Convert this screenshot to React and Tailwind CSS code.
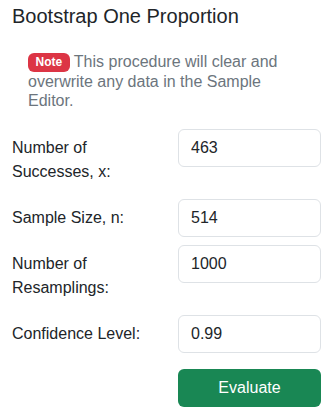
const fields = [
  { label: ['Number of', 'Successes, x:'], value: '463' },
  { label: ['Sample Size, n:'], value: '514' },
  { label: ['Number of', 'Resamplings:'], value: '1000' },
  { label: ['Confidence Level:'], value: '0.99' },
];

const App = () => {
  return (
    <div className="w-[332px] h-[419px] bg-white font-['Liberation_Sans',Arial,sans-serif] text-[#212529] pl-3 pr-[11px]">
      {/* title */}
      <h2 className="pt-1 text-[20px] leading-[24px]">Bootstrap One Proportion</h2>

      {/* note */}
      <p className="mt-6 pl-4 pr-4 text-base leading-[19.2px] text-[#6c757d]">
        <span className="inline-block bg-[#dc3545] text-white text-[12px] font-bold leading-none px-[7.5px] pt-[3.5px] pb-[3.5px] rounded-[6px] align-[1px]">
          Note
        </span>{' '}
        <span>This procedure will clear and</span>{' '}
        <span>overwrite any data in the Sample Editor.</span>
      </p>

      {/* form */}
      <div className="mt-[19px] flex flex-col gap-2">
        {fields.map((f, i) => (
          <div key={i} className="grid grid-cols-[166px_1fr] items-start">
            <label className="pt-[7px] pb-[7px] text-base leading-6">
              {f.label.map((l, j) => (
                <div key={j}>{l}</div>
              ))}
            </label>
            <input
              type="text"
              defaultValue={f.value}
              className="w-full h-[38px] px-3 border border-[#dee2e6] rounded-[6px] text-base text-[#212529] outline-none"
            />
          </div>
        ))}
      </div>

      <div className="mt-4 grid grid-cols-[166px_1fr]">
        <div />
        <button className="h-[38px] bg-[#198754] text-white text-base rounded-[6px]">
          Evaluate
        </button>
      </div>
    </div>
  );
};

export default App;
